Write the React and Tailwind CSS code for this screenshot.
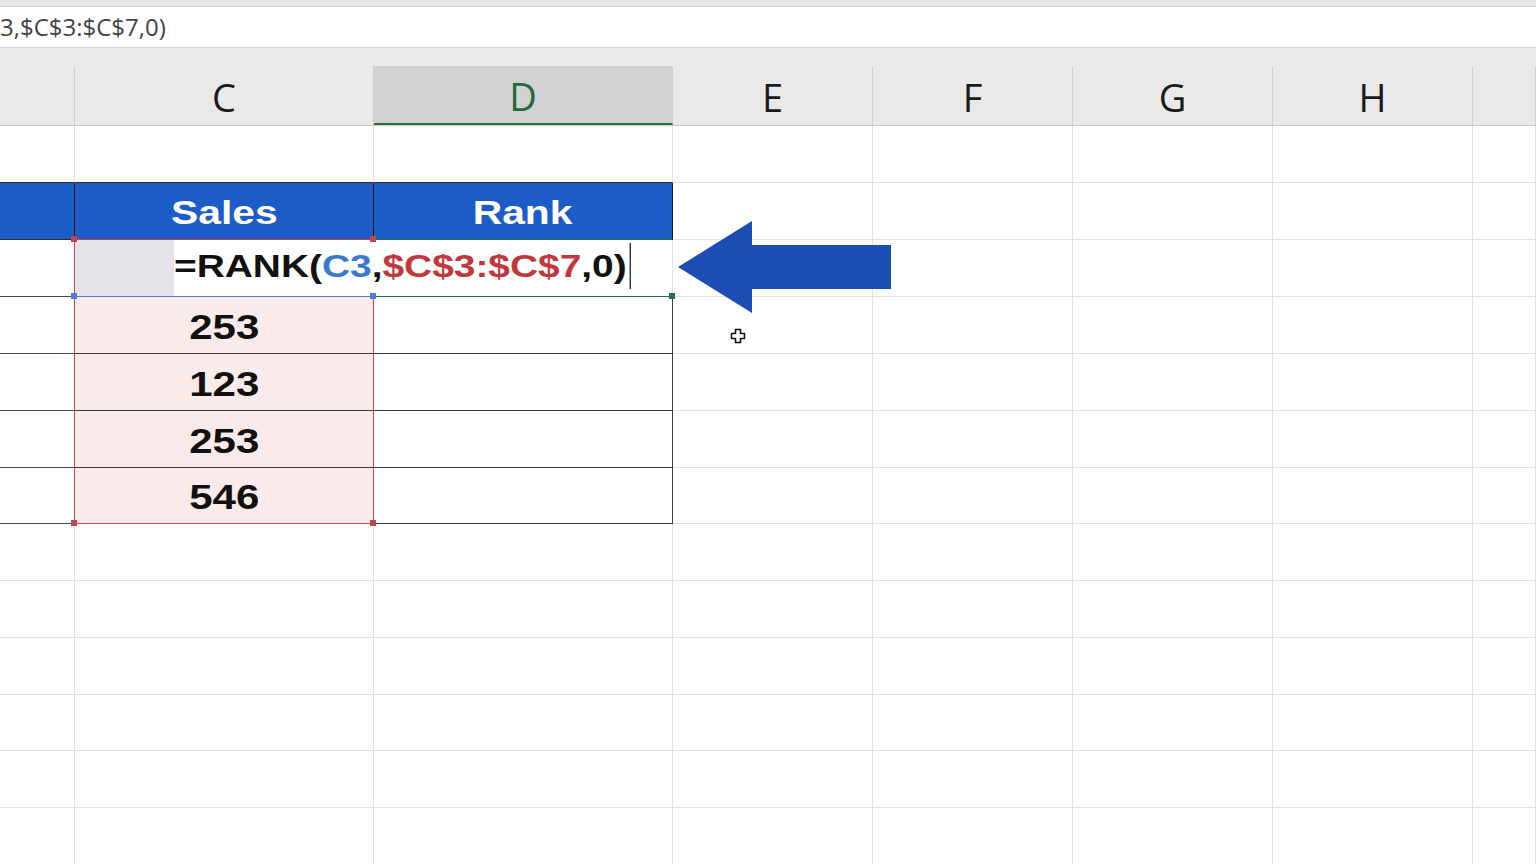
import React from "react";

const GRID = "border-[#e1e1e1]";
const colW = ["w-[75px]", "w-[299px]", "w-[299px]", "w-[200px]", "w-[200px]", "w-[200px]", "w-[200px]", "w-[63px]"];
const letters = ["", "C", "D", "E", "F", "G", "H", ""];

function EmptyRow({ dark, h = "h-[57px]" }) {
  return (
    <div className={`flex ${h}`}>
      {colW.map((w, i) => (
        <div
          key={i}
          className={`${w} h-full shrink-0 border-r border-b ${
            dark && i < 3 ? "border-b-[#2b2b2b]" : ""
          } ${GRID}`}
        />
      ))}
    </div>
  );
}

function Rest({ from }) {
  return colW.slice(from).map((w, i) => (
    <div key={i} className={`${w} h-full shrink-0 border-r border-b ${GRID}`} />
  ));
}

const bold = "font-['Liberation_Sans',Arial,sans-serif] font-bold";

function DataRow({ value, last }) {
  return (
    <div className={`flex ${last ? "h-[56px]" : "h-[57px]"}`}>
      <div className="w-[75px] h-full shrink-0 border-r border-b border-r-[#c4424a] border-b-[#4a4a4a]" />
      <div
        className={`w-[299px] h-full shrink-0 border-r border-b border-r-[#c4424a] ${
          last ? "border-b-[#c4424a]" : "border-b-[#3a3a3a]"
        } bg-[#fbeaea] flex items-center justify-center`}
      >
        <span className={`${bold} inline-block scale-x-[1.2] text-[35px] leading-none text-[#111] pt-[2px]`}>{value}</span>
      </div>
      <div className="w-[299px] h-full shrink-0 border-r border-b border-r-[#3a3a3a] border-b-[#3a3a3a]" />
      <Rest from={3} />
    </div>
  );
}

function Handle({ cls }) {
  return <div className={`absolute w-[6px] h-[6px] ${cls}`} />;
}

export default function App() {
  return (
    <div className="relative w-[1536px] h-[864px] overflow-hidden bg-white">
      {/* top strip */}
      <div className="h-[7px] bg-[#e6e6e6] border-b border-[#d5d5d5]" />
      {/* formula bar */}
      <div className="h-[41px] bg-white border-b border-[#d4d4d4] flex items-center">
        <span className="font-['Open_Sans',sans-serif] text-[24px] leading-none text-[#444] whitespace-nowrap pb-[1px]">
          3,$C$3:$C$7,0)
        </span>
      </div>
      {/* column headers */}
      <div className="bg-[#e9e9e9] pt-[18px] border-b border-[#c9c9c9] flex">
        {colW.map((w, i) => (
          <div
            key={i}
            className={`${w} h-[59px] shrink-0 border-r border-[#cdcdcd] flex items-center justify-center font-['Open_Sans',sans-serif] text-[38px] leading-none ${
              i === 2 ? "bg-[#d2d2d2] border-b-2 border-b-[#217346] text-[#1e6b3b]" : "text-[#1a1a1a]"
            }`}
          >
            <span className="pt-[2px]">{letters[i]}</span>
          </div>
        ))}
      </div>

      {/* row 1 */}
      <EmptyRow dark />

      {/* row 2: table header */}
      <div className="flex h-[57px]">
        <div className="w-[75px] h-full shrink-0 bg-[#1b5cc6] border-r border-b border-r-[#1a1a1a] border-b-[#2b2b2b]" />
        <div className="w-[299px] h-full shrink-0 bg-[#1b5cc6] border-r border-b border-r-[#1a1a1a] border-b-[#c4424a] flex items-center justify-center">
          <span className={`${bold} inline-block scale-x-[1.2] text-[34px] leading-none text-white pt-[2px]`}>Sales</span>
        </div>
        <div className="w-[299px] h-full shrink-0 bg-[#1b5cc6] border-r border-b border-r-[#1a1a1a] border-b-[#217346] flex items-center justify-center">
          <span className={`${bold} inline-block scale-x-[1.2] text-[34px] leading-none text-white pt-[2px]`}>Rank</span>
        </div>
        <Rest from={3} />
      </div>

      {/* row 3: editing */}
      <div className="flex h-[57px]">
        <div className="w-[75px] h-full shrink-0 border-r border-b border-r-[#c4424a] border-b-[#4a4a4a]" />
        <div className="w-[299px] h-full shrink-0 border-b border-b-[#4a7fd6] flex">
          <div className="w-[99px] h-full shrink-0 bg-[#e6e2ea]" />
          <div className="flex items-center whitespace-nowrap">
            <span className={`${bold} inline-block origin-left scale-x-[1.215] text-[32px] leading-none text-[#111] pt-[2px]`}>
              =RANK(<span className="text-[#3b78d4]">C3</span>,<span className="text-[#c1373c]">$C$3:$C$7</span>,0)
              <span className="inline-block align-middle w-[1px] h-[46px] bg-[#111] ml-[2px] -mt-[6px]" />
            </span>
          </div>
        </div>
        <div className="w-[299px] h-full shrink-0 border-r border-b border-b-[#217346] border-r-[#e1e1e1]" />
        <Rest from={3} />
      </div>

      <DataRow value="253" />
      <DataRow value="123" />
      <DataRow value="253" />
      <DataRow value="546" last />

      <EmptyRow />
      <EmptyRow />
      <EmptyRow />
      <EmptyRow h="h-[56px]" />
      <EmptyRow />
      <EmptyRow />

      {/* range handles */}
      <Handle cls="left-[71px] top-[236px] bg-[#c4424a]" />
      <Handle cls="left-[370px] top-[236px] bg-[#c4424a]" />
      <Handle cls="left-[71px] top-[520px] bg-[#c4424a]" />
      <Handle cls="left-[370px] top-[520px] bg-[#c4424a]" />
      <Handle cls="left-[71px] top-[293px] bg-[#4a7fd6]" />
      <Handle cls="left-[370px] top-[293px] bg-[#4a7fd6]" />
      <Handle cls="left-[669px] top-[293px] bg-[#217346]" />

      {/* big arrow */}
      <svg className="absolute left-[678px] top-[221px]" width="214" height="92" viewBox="0 0 214 92">
        <polygon points="0,46 74,0 74,24 213,24 213,68 74,68 74,92" fill="#1b4db3" />
      </svg>

      {/* mouse cursor */}
      <svg className="absolute left-[730px] top-[328px]" width="16" height="16" viewBox="0 0 16 16">
        <path
          d="M5.5 1.5h5v4h4v5h-4v4h-5v-4h-4v-5h4z"
          fill="#fff"
          stroke="#111"
          strokeWidth="1.6"
          strokeLinejoin="round"
        />
      </svg>
    </div>
  );
}
